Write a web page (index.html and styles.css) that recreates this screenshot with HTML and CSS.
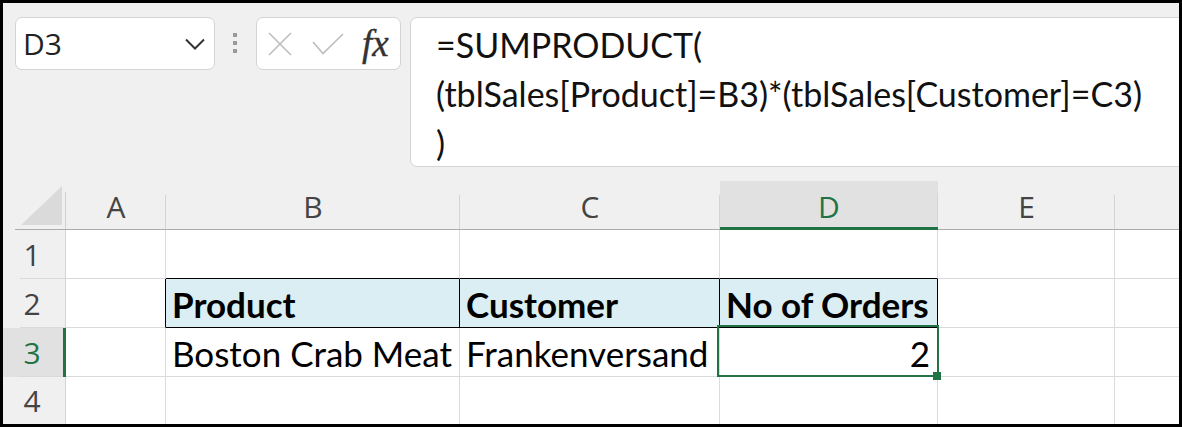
FILE: index.html
```html
<!DOCTYPE html>
<html lang="en">
<head>
    <meta charset="UTF-8">
    <title>SUMPRODUCT - No of Orders</title>
    <link rel="stylesheet" href="styles.css">
</head>
<body>
    <div class="sheet">
        <!-- formula bar: name box, grip, cancel/enter/fx buttons, formula -->
        <div class="formula-bar">
            <div class="name-box">
                <span class="cell-ref">D3</span>
                <svg class="chevron" width="20" height="12" viewBox="0 0 20 12"><path d="M1 1.5L10 10.5L19 1.5" fill="none" stroke="#333" stroke-width="2"/></svg>
            </div>
            <div class="grip"><span></span><span></span><span></span></div>
            <div class="fx-box">
                <svg width="24" height="24" viewBox="0 0 24 24"><path d="M1 1L23 23M23 1L1 23" fill="none" stroke="#bdbdbd" stroke-width="1.6"/></svg>
                <svg class="check" width="32" height="22" viewBox="0 0 32 22"><path d="M1 9L11 20.5L31 1" fill="none" stroke="#bdbdbd" stroke-width="1.6"/></svg>
                <span class="fx">fx</span>
            </div>
            <div class="formula">=SUMPRODUCT(<br>(tblSales[Product]=B3)*(tblSales[Customer]=C3)<br>)</div>
        </div>

        <!-- worksheet grid -->
        <div class="grid">
            <div class="corner">
                <svg width="42" height="40" viewBox="0 0 42 40"><polygon points="41,0 41,39 0,39" fill="#dadada"/></svg>
            </div>
            <div class="col-head">A</div>
            <div class="col-head">B</div>
            <div class="col-head">C</div>
            <div class="col-head active">D</div>
            <div class="col-head">E</div>
            <div class="col-head last"></div>

            <div class="row-head">1</div>
            <div class="cell"></div>
            <div class="cell above-head"></div>
            <div class="cell above-head"></div>
            <div class="cell above-head"></div>
            <div class="cell"></div>
            <div class="cell last"></div>

            <div class="row-head">2</div>
            <div class="cell before-head"></div>
            <div class="cell th">Product</div>
            <div class="cell th">Customer</div>
            <div class="cell th">No of Orders</div>
            <div class="cell"></div>
            <div class="cell last"></div>

            <div class="row-head active">3</div>
            <div class="cell"></div>
            <div class="cell">Boston Crab Meat</div>
            <div class="cell">Frankenversand</div>
            <div class="cell num selected">2</div>
            <div class="cell"></div>
            <div class="cell last"></div>

            <div class="row-head bottom">4</div>
            <div class="cell bottom"></div>
            <div class="cell bottom"></div>
            <div class="cell bottom"></div>
            <div class="cell bottom"></div>
            <div class="cell bottom"></div>
            <div class="cell bottom last"></div>
        </div>
    </div>
</body>
</html>
```

FILE: styles.css
```css
* {
    box-sizing: border-box;
}
body {
    margin: 0;
    background: #fff;
}
.sheet {
    width: 1182px;
    height: 427px;
    border: 3px solid #000;
    background: #f0f0f0;
    overflow: hidden;
    display: flex;
    flex-direction: column;
}

/* Formula bar */
.formula-bar {
    height: 178px;
    flex: none;
    display: flex;
    align-items: flex-start;
    padding: 14px 0 0 12px;
}
.name-box {
    width: 200px;
    height: 53px;
    background: #fff;
    border: 1px solid #d4d4d4;
    border-radius: 7px;
    display: flex;
    align-items: center;
    justify-content: space-between;
    padding: 0 9px 0 7px;
}
.cell-ref {
    font-family: "Open Sans", sans-serif;
    font-size: 30px;
    color: #222;
}
.grip {
    width: 4px;
    margin: 16px 19px 0 18px;
    display: flex;
    flex-direction: column;
    gap: 4px;
}
.grip span {
    height: 4px;
    background: #999;
}
.fx-box {
    width: 145px;
    height: 53px;
    background: #fff;
    border: 1px solid #d4d4d4;
    border-radius: 7px;
    display: flex;
    align-items: center;
    padding: 0 0 0 11px;
}
.check {
    margin-left: 20px;
}
.fx {
    margin-left: 18px;
    font-family: "Liberation Serif", serif;
    font-style: italic;
    font-size: 37px;
    color: #333;
    line-height: 1;
    -webkit-text-stroke: 0.4px #333;
}
.formula {
    flex: 1;
    height: 150px;
    margin: 0 -20px 0 9px;
    background: #fff;
    border: 1px solid #d4d4d4;
    border-radius: 7px;
    padding: 2px 0 0 25px;
    font-family: Lato, sans-serif;
    font-size: 34px;
    line-height: 49px;
    color: #111;
    white-space: nowrap;
}

/* Worksheet grid */
.grid {
    flex: 1;
    display: grid;
    grid-template-columns: 63px 100px 294px 260px 218px 177px 1fr;
    grid-template-rows: 49px 49px 49px 49px 1fr;
}
.corner {
    display: flex;
    align-items: flex-start;
    padding: 5px 0 0 18px;
    background:
        linear-gradient(#ababab, #ababab) right bottom / 51px 1px no-repeat,
        linear-gradient(#d0d0d0, #d0d0d0) right bottom / 1px 38px no-repeat;
}
.col-head {
    display: flex;
    align-items: center;
    justify-content: center;
    font-family: "Open Sans", sans-serif;
    font-size: 30px;
    color: #444;
    padding-top: 2px;
    border-bottom: 1px solid #ababab;
    background: linear-gradient(#d4d4d4, #d4d4d4) right bottom / 1px 34px no-repeat;
}
.col-head.active {
    background-color: #e1e1e1;
    color: #217346;
    border-bottom: 3px solid #217346;
    padding-top: 4px;
}
.col-head.last {
    background: none;
}
.row-head {
    display: flex;
    align-items: center;
    justify-content: center;
    padding-right: 4px;
    font-family: "Open Sans", sans-serif;
    font-size: 30px;
    color: #444;
    border-right: 1px solid #d4d4d4;
    background: linear-gradient(#dadada, #dadada) right bottom / 45px 1px no-repeat;
}
.row-head.active {
    background-color: #e1e1e1;
    color: #217346;
    border-right: 3px solid #217346;
    padding-right: 2px;
}
.row-head.bottom {
    background: none;
}
.cell {
    display: flex;
    align-items: flex-end;
    padding: 0 6px 2px;
    font-family: Lato, sans-serif;
    font-size: 35px;
    line-height: 1.2;
    color: #000;
    white-space: nowrap;
    background: #fff;
    border-right: 1px solid #dadada;
    border-bottom: 1px solid #dadada;
}
.cell.last {
    border-right: none;
}
.cell.bottom {
    border-bottom: none;
}
.cell.above-head {
    border-bottom-color: #000;
}
.cell.before-head {
    border-right-color: #000;
}
.cell.th {
    font-weight: bold;
    background: #daeef3;
    border-right-color: #000;
    border-bottom-color: #000;
}
.cell.num {
    justify-content: flex-end;
    padding-right: 7px;
}
/* active cell outline and fill handle */
.cell.selected {
    position: relative;
}
.cell.selected::before {
    content: "";
    position: absolute;
    left: -3px;
    top: -3px;
    right: -2px;
    bottom: -1px;
    border: 2px solid #217346;
}
.cell.selected::after {
    content: "";
    position: absolute;
    right: -4px;
    bottom: -4px;
    width: 8px;
    height: 8px;
    background: #217346;
}
```
